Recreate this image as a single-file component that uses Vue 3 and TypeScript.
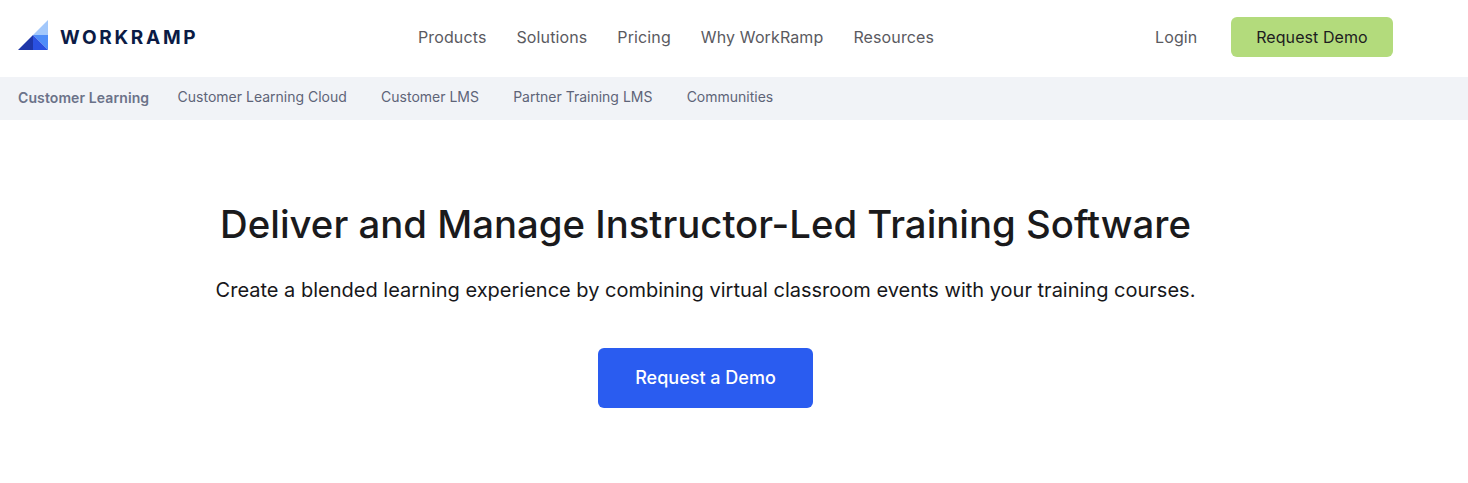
<template>
  <div class="page">
    <header class="topbar">
      <a class="logo" href="#">
        <svg width="30" height="30" viewBox="0 0 30 30">
          <polygon points="30,0 30,15 15,15" fill="#a3c8fb" />
          <polygon points="15,15 30,15 30,30" fill="#4f8df8" />
          <polygon points="15,15 30,30 15,30" fill="#2a50e0" />
          <polygon points="15,15 15,30 0,30" fill="#1e36a8" />
        </svg>
        <span class="logo-text">WORKRAMP</span>
      </a>
      <nav class="main-nav">
        <a v-for="item in mainLinks" :key="item" href="#">{{ item }}</a>
      </nav>
      <div class="actions">
        <a class="login" href="#">Login</a>
        <a class="demo" href="#">Request Demo</a>
      </div>
    </header>

    <div class="subnav">
      <strong>Customer Learning</strong>
      <a v-for="item in subLinks" :key="item" href="#">{{ item }}</a>
    </div>

    <section class="hero">
      <h1>Deliver and Manage Instructor-Led Training Software</h1>
      <p>Create a blended learning experience by combining virtual classroom events with your training courses.</p>
      <a class="cta" href="#">Request a Demo</a>
    </section>
  </div>
</template>

<script setup lang="ts">
const mainLinks: string[] = ['Products', 'Solutions', 'Pricing', 'Why WorkRamp', 'Resources']
const subLinks: string[] = ['Customer Learning Cloud', 'Customer LMS', 'Partner Training LMS', 'Communities']
</script>

<style>
body {
  background: #fff;
}
</style>

<style scoped>
.page {
  font-family: Inter, sans-serif;
  min-height: 483px;
}

a {
  text-decoration: none;
}

.topbar {
  display: flex;
  align-items: center;
  height: 77px;
  padding-left: 18px;
  padding-bottom: 4px;
  box-sizing: border-box;
}

.logo {
  display: flex;
  align-items: center;
  gap: 12px;
  width: 400px;
  flex-shrink: 0;
}

.logo svg {
  margin-top: -3px;
}

.logo-text {
  font-family: Inter, sans-serif;
  font-weight: 700;
  font-size: 19px;
  letter-spacing: 2.7px;
  color: #0b1b45;
  margin-top: 2px;
}

.main-nav {
  display: flex;
  gap: 30px;
  width: 737px;
  flex-shrink: 0;
}

.main-nav a,
.login {
  font-size: 16px;
  letter-spacing: 0.12px;
  color: #5a5a5f;
}

.actions {
  display: flex;
  align-items: center;
}

.login {
  width: 76px;
}

.demo {
  display: flex;
  align-items: center;
  justify-content: center;
  width: 162px;
  height: 40px;
  border-radius: 6px;
  background: #b3db7c;
  color: #1d1d1f;
  font-size: 16px;
  letter-spacing: 0.08px;
}

.subnav {
  display: flex;
  align-items: center;
  height: 43px;
  padding-left: 18px;
  padding-bottom: 5px;
  box-sizing: border-box;
  background: #f1f3f7;
  font-size: 14px;
  color: #5e6478;
}

.subnav strong {
  font-weight: 600;
  letter-spacing: 0.1px;
  color: #6b7289;
  margin-right: 28.4px;
  margin-top: 2px;
}

.subnav a {
  color: #5e6478;
  margin-right: 34.2px;
}

.hero {
  display: flex;
  flex-direction: column;
  align-items: center;
  width: 1411px;
  padding-top: 81px;
}

h1 {
  margin: 0;
  font-size: 38.35px;
  font-weight: 500;
  line-height: 46px;
  color: #1a1a1c;
}

p {
  margin: 28px 0 0;
  font-size: 20px;
  line-height: 30px;
  color: #17171a;
}

.cta {
  display: flex;
  align-items: center;
  justify-content: center;
  width: 215px;
  height: 60px;
  padding-bottom: 1px;
  box-sizing: border-box;
  margin-top: 43px;
  border-radius: 6px;
  background: #2a5cf0;
  color: #fff;
  font-size: 18px;
  font-weight: 500;
}
</style>
